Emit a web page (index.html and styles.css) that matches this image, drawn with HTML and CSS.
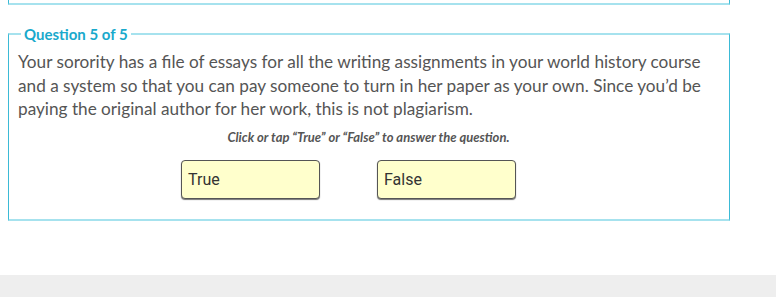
FILE: index.html
```html
<!DOCTYPE html>
<html>
<head>
  <title>Quiz</title>
  <link rel="stylesheet" href="styles.css">
</head>
<body>

<div class="quiz">
  <div class="prev-box"></div>

  <fieldset class="question">
    <legend>Question 5 of 5</legend>
    <p class="prompt">Your sorority has a file of essays for all the writing assignments in your world history course and a system so that you can pay someone to turn in her paper as your own. Since you’d be paying the original author for her work, this is not plagiarism.</p>
    <p class="hint">Click or tap “True” or “False” to answer the question.</p>
    <div class="answers">
      <button class="answer">True</button>
      <button class="answer">False</button>
    </div>
  </fieldset>
</div>

<div class="footer"></div>

</body>
</html>
```

FILE: styles.css
```css
body {
  margin: 0;
  font-family: Lato, "Open Sans", sans-serif;
  background-color: white;
}

.quiz {
  padding: 0 46px 0 8px;
  height: 275px;
}

.prev-box {
  height: 3px;
  border-left: 1px solid #3bbad6;
  border-right: 1px solid #3bbad6;
  border-bottom: 2px solid #a6e2ee;
}

/* question card */
.question {
  margin: 20px 0 0 0;
  padding: 0 10px 20px 9px;
  border: 1px solid #3bbad6;
  border-top: 2px solid #a6e2ee;
  border-bottom: 2px solid #a6e2ee;
}

.question legend {
  margin-left: 3px;
  padding: 0 3px;
  font-size: 15px;
  font-weight: bold;
  color: #19a9cc;
}

.prompt {
  margin: 7px 0 0 0;
  font-size: 17.2px;
  line-height: 23.5px;
  color: #555;
}

.hint {
  margin: 8px 0 0 0;
  text-align: center;
  font-size: 13px;
  font-style: italic;
  font-weight: bold;
  color: #555;
}

.answers {
  display: flex;
  gap: 57px;
  margin-top: 15px;
  padding-left: 163px;
}

.answer {
  width: 139px;
  height: 39px;
  padding: 0 6px;
  text-align: left;
  font-family: Roboto, sans-serif;
  font-size: 16px;
  color: #333;
  background-color: #ffffcc;
  border: 1px solid #555;
  border-radius: 4px;
  box-shadow: 0 1px 1px #777;
  cursor: pointer;
}

.footer {
  height: 22px;
  background-color: #eeeeee;
}
```
